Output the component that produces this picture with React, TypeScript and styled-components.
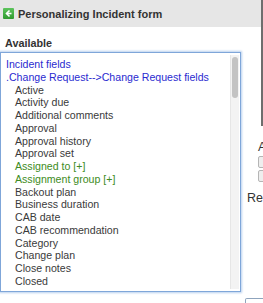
import React from 'react';
import styled, { createGlobalStyle } from 'styled-components';

const Global = createGlobalStyle`
  html, body { margin: 0; padding: 0; background: #ffffff; }
  body {
    font-family: "Liberation Sans", Arial, Helvetica, sans-serif;
    width: 263px;
    height: 303px;
    overflow: hidden;
  }
`;

const Page = styled.div`
  position: relative;
  width: 263px;
  height: 303px;
  overflow: hidden;
  background: #ffffff;
  &::after {
    content: '';
    position: absolute;
    right: 0;
    top: 0;
    width: 2px;
    height: 126px;
    background: #6e6e6e;
  }
`;

const Header = styled.div`
  height: 27px;
  background: #e6e6e6;
  display: flex;
  align-items: center;
  gap: 4px;
  padding-left: 3px;
  box-sizing: border-box;
`;

const BackIcon = styled.div`
  width: 11px;
  height: 11px;
  border-radius: 1px;
  background: linear-gradient(#5cc45c, #2f9a2f);
  display: flex;
  align-items: center;
  justify-content: center;
`;

const Title = styled.div`
  font-size: 11px;
  font-weight: bold;
  color: #333333;
`;

const Body = styled.div`
  display: flex;
  align-items: flex-start;
`;

const Left = styled.div`
  width: 241px;
  flex-shrink: 0;
  display: flex;
  flex-direction: column;
`;

const Label = styled.div`
  font-size: 10.8px;
  font-weight: bold;
  color: #333333;
  padding: 9px 0 0 5px;
  height: 14px;
  line-height: 14px;
  margin-bottom: 2px;
`;

const ListBox = styled.div`
  height: 240px;
  box-sizing: border-box;
  border: 1px solid #7fa6d9;
  box-shadow: 0 0 2px 1px #b9d0ee;
  display: flex;
  background: #ffffff;
`;

const Options = styled.div`
  flex: 1;
  padding-top: 5px;
  overflow: hidden;
`;

const Option = styled.div<{ $kind: 'group' | 'item' | 'ref' }>`
  font-size: 10.6px;
  height: 12.75px;
  line-height: 12.75px;
  white-space: nowrap;
  padding-left: ${(p) => (p.$kind === 'group' ? '5px' : '14px')};
  color: ${(p) => (p.$kind === 'group' ? '#2a2ad0' : p.$kind === 'ref' ? '#3d8b22' : '#3a3a3a')};
`;

const Track = styled.div`
  width: 8px;
  margin: 2px 1px 2px 0;
  background: #f3f3f3;
  border-left: 1px solid #e6e6e6;
  display: flex;
  flex-direction: column;
  align-items: center;
`;

const Thumb = styled.div`
  width: 6px;
  height: 41px;
  margin-top: 2px;
  border-radius: 3px;
  background: #c3c3c3;
`;

const Side = styled.div`
  flex: 1;
  min-width: 0;
  display: flex;
  flex-direction: column;
  padding-top: 113px;
  padding-left: 6px;
`;

const SideLabel = styled.div<{ $indent: number; $gap?: number }>`
  font-size: 12.5px;
  line-height: 14px;
  color: #333333;
  margin-left: ${(p) => p.$indent}px;
  margin-top: ${(p) => p.$gap ?? 0}px;
  white-space: nowrap;
`;

const SideButton = styled.div`
  width: 12px;
  height: 10px;
  flex-shrink: 0;
  margin-left: 11px;
  margin-top: 2px;
  border: 1px solid #b5b5b5;
  border-radius: 2px;
  background: #eeeeee;
`;

const BottomBox = styled.div`
  margin-top: 93px;
  height: 10px;
  width: 30px;
  flex-shrink: 0;
  margin-left: -2px;
  border: 1px solid #8fa4bd;
  border-bottom: none;
  border-radius: 2px 0 0 0;
`;

type Kind = 'group' | 'item' | 'ref';
const options: [string, Kind][] = [
  ['Incident fields', 'group'],
  ['.Change Request-->Change Request fields', 'group'],
  ['Active', 'item'],
  ['Activity due', 'item'],
  ['Additional comments', 'item'],
  ['Approval', 'item'],
  ['Approval history', 'item'],
  ['Approval set', 'item'],
  ['Assigned to [+]', 'ref'],
  ['Assignment group [+]', 'ref'],
  ['Backout plan', 'item'],
  ['Business duration', 'item'],
  ['CAB date', 'item'],
  ['CAB recommendation', 'item'],
  ['Category', 'item'],
  ['Change plan', 'item'],
  ['Close notes', 'item'],
  ['Closed', 'item'],
];

export default function App() {
  return (
    <>
      <Global />
      <Page>
        <Header>
          <BackIcon>
            <svg width="9" height="9" viewBox="0 0 9 9">
              <path d="M5.5 1.5 L2.5 4.5 L5.5 7.5" stroke="#ffffff" strokeWidth="1.6" fill="none" />
              <path d="M2.8 4.5 H7.5" stroke="#ffffff" strokeWidth="1.6" />
            </svg>
          </BackIcon>
          <Title>Personalizing Incident form</Title>
        </Header>
        <Body>
          <Left>
            <Label>Available</Label>
            <ListBox>
              <Options>
                {options.map(([t, k]) => (
                  <Option key={t} $kind={k}>
                    {t}
                  </Option>
                ))}
              </Options>
              <Track>
                <Thumb />
              </Track>
            </ListBox>
          </Left>
          <Side>
            <SideLabel $indent={11}>A</SideLabel>
            <SideButton />
            <SideButton />
            <SideLabel $indent={0} $gap={9}>Re</SideLabel>
            <BottomBox />
          </Side>
        </Body>
      </Page>
    </>
  );
}
